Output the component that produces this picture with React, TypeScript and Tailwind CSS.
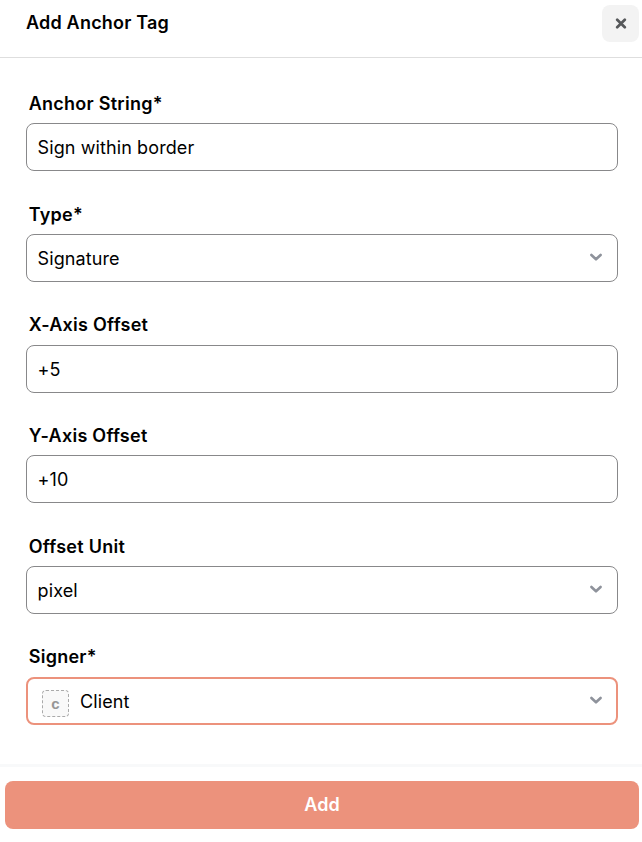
import type { ReactNode } from 'react'

interface FieldProps {
  label: string
  children: ReactNode
  select?: boolean
  focused?: boolean
}

function ChevronIcon() {
  return (
    <svg className="mb-[2px] h-3 w-4 shrink-0" viewBox="0 0 16 12" fill="none" stroke="#8e929b" strokeWidth="2.6" strokeLinecap="round" strokeLinejoin="round">
      <path d="M3.4 4 L8 8.3 L12.6 4" />
    </svg>
  )
}

function Field({ label, children, select, focused }: FieldProps) {
  return (
    <div className="h-[110.7px]">
      <div className="flex h-[30.3px] items-start pl-[2.7px] text-[18px] leading-[22px] font-semibold tracking-[0.26px]">{label}</div>
      <div
        className={
          focused
            ? 'flex h-12 items-center justify-between rounded-lg border-2 border-[#ec927c] pr-[12px] pl-[10px]'
            : 'flex h-12 items-center justify-between rounded-lg border border-[#88888a] pr-[13px] pl-[10.6px]'
        }
      >
        <div className="flex items-center pt-[2px] text-[18px] leading-[22px] tracking-[0.1px]">{children}</div>
        {select && <ChevronIcon />}
      </div>
    </div>
  )
}

export default function App() {
  return (
    <div className="flex h-[842px] w-[642px] flex-col overflow-hidden bg-white font-['Inter',sans-serif] text-black">
      {/* Header */}
      <header className="flex h-[58px] shrink-0 items-start justify-between border-b border-[#dedede] pt-[5px] pr-[3px] pl-[26px]">
        <h1 className="pt-[7px] text-[18px] leading-[22px] font-semibold tracking-[0.2px]">Add Anchor Tag</h1>
        <button type="button" aria-label="Close" className="flex size-[37px] items-center justify-center rounded-lg bg-[#f3f3f3]">
          <svg className="size-3" viewBox="0 0 12 12" fill="none" stroke="#56585a" strokeWidth="2.7" strokeLinecap="round">
            <path d="M2.2 1.7 L9.8 9.3 M9.8 1.7 L2.2 9.3" />
          </svg>
        </button>
      </header>

      {/* Form */}
      <main className="h-[706px] shrink-0 pt-[35px] pr-6 pl-[26px]">
        <Field label="Anchor String*">Sign within border</Field>
        <Field label="Type*" select>Signature</Field>
        <Field label="X-Axis Offset">+5</Field>
        <Field label="Y-Axis Offset">+10</Field>
        <Field label="Offset Unit" select>pixel</Field>
        <Field label="Signer*" select focused>
          <span className="mt-1 mr-[11px] ml-1 flex size-[27px] items-center justify-center rounded-[4px] border border-dashed border-[#aaaaaa] bg-[#f9f9f9] font-['Liberation_Sans',sans-serif] text-[15px] leading-none font-bold tracking-normal text-[#969696]">
            c
          </span>
          <span>Client</span>
        </Field>
      </main>

      {/* Footer */}
      <footer className="border-t-[3px] border-[#f8f9fa] pt-[14px] pr-[3px] pl-[5px]">
        <button type="button" className="h-12 w-full rounded-lg bg-[#ec927c] pb-[2px] text-[18px] font-semibold tracking-[0.1px] text-white">Add</button>
      </footer>
    </div>
  )
}
